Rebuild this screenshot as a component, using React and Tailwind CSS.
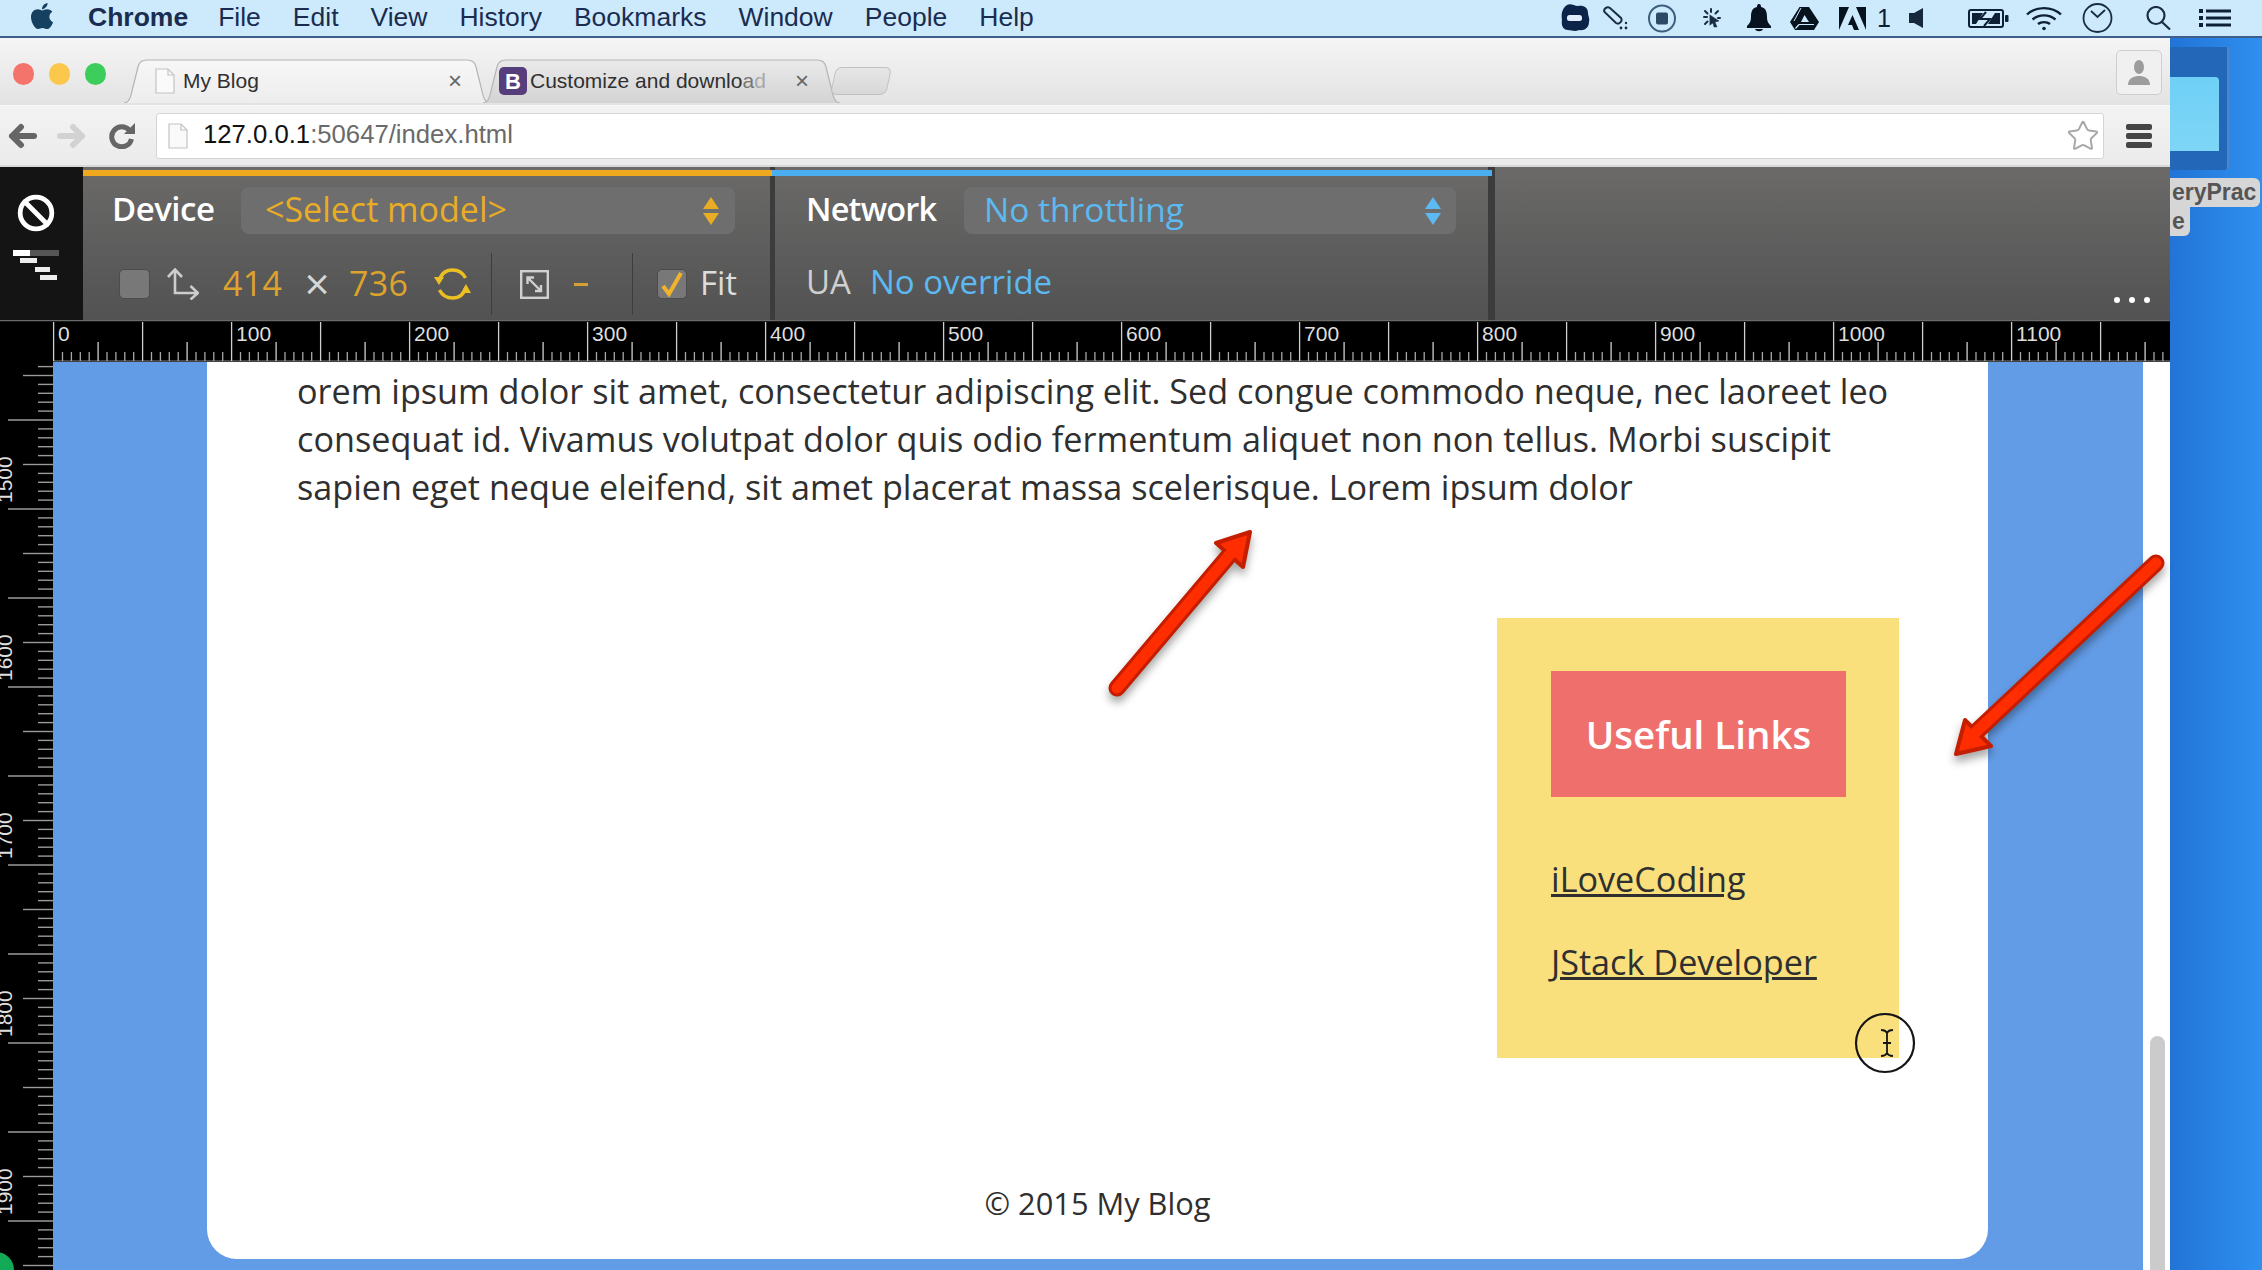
import { Ban, Star } from 'lucide-react';
import { FaApple } from 'react-icons/fa';

const MENU = ['File', 'Edit', 'View', 'History', 'Bookmarks', 'Window', 'People', 'Help'];

function MenuBar() {
    return (
        <div className="h-[38px] shrink-0 flex items-center bg-[#cdeafd] border-b-2 border-[#3f5f8a] font-['Liberation_Sans',sans-serif] text-[26.5px] text-[#1a2c50]">
            <FaApple className="ml-[29px] w-[26px] h-[30px] text-[#16405f] -mt-1" />
            <span className="ml-[33px] font-bold">Chrome</span>
            <div className="ml-[30px] flex gap-[32px]">
                {MENU.map((m) => <span key={m}>{m}</span>)}
            </div>
            <TrayIcons />
        </div>
    );
}

function TrayIcons() {
    return (
        <div className="ml-auto mr-[31px] flex items-center text-[#0d2036]">
            <svg className="w-[29px] h-[28px]" viewBox="0 0 29 28"><path d="M6 1 C10 -1 13 2 17 2 C22 1 27 3 27 9 C27 12 29 14 28 18 C28 24 23 27 18 26 C14 28 10 26 7 26 C2 26 0 21 1 16 C0 11 1 4 6 1Z" fill="#0b2448" /><rect x="6" y="11" width="15" height="6" rx="2.5" fill="#dfeefa" /></svg>
            <svg className="ml-[12px] w-[27px] h-[25px]" viewBox="0 0 27 25" fill="none" stroke="#1a2c44" strokeWidth="2"><path d="M2.5 6 C1 3 5 0 8 2 L19 12 C21 15 17 19 14 17 Z" /><g fill="#1a2c44" stroke="none"><circle cx="19" cy="22" r="1.4" /><circle cx="24" cy="22" r="1.4" /><circle cx="24" cy="17" r="1.2" /></g></svg>
            <svg className="ml-[19px] w-[28px] h-[29px]" viewBox="0 0 28 29"><circle cx="14" cy="14.5" r="13" fill="none" stroke="#3c5f7c" strokeWidth="2" /><rect x="8" y="8.5" width="12" height="12" rx="2" fill="#2a4a66" /></svg>
            <svg className="ml-[26px] w-[20px] h-[20px]" viewBox="0 0 20 20" stroke="#1a2c44" strokeWidth="2" strokeLinecap="round"><path d="M9 1 V4 M2 9 H5 M3 3 L5.5 5.5 M16 3 L13.5 5.5 M3 16 L5.5 13.5 M18 10 H16" /><path d="M8 7 L17 13 L13 14 L15 19 L12 19 L11 15 L8 17Z" fill="#1a2c44" strokeWidth="0.5" /></svg>
            <svg className="ml-[24px] w-[26px] h-[28px]" viewBox="0 0 26 28" fill="#07121f"><path d="M13 0 C15 0 15 2 15 3 C20 4 21 8 21 13 C21 18 23 20 25 22 V24 H1 V22 C3 20 5 18 5 13 C5 8 6 4 11 3 C11 2 11 0 13 0Z" /><path d="M9 25 H17 C16 28 10 28 9 25Z" /></svg>
            <svg className="ml-[18px] w-[29px] h-[23px]" viewBox="0 0 29 23"><path d="M9.5 0 H19 L29 15 L24 23 H5 L0 15 Z" fill="#07121f" /><path d="M14.5 8 L19 15 H11Z" fill="#cdeafd" /><path d="M9 17.5 L5.5 21.5 M9 17.5 H24" stroke="#cdeafd" strokeWidth="1.2" /><path d="M11 1 L4 14" stroke="#cdeafd" strokeWidth="1" /></svg>
            <svg className="ml-[20px] w-[27px] h-[23px]" viewBox="0 0 27 23"><path d="M0 0 H10 L0 23Z M17 0 H27 V23Z" fill="#07121f" /><path d="M13.5 8 L20 23 H15 L13 18 H9 Z" fill="#07121f" /></svg>
            <span className="ml-[11px] w-[9px] text-[25px] leading-none">1</span>
            <svg className="ml-[23px] w-[14px] h-[20px]" viewBox="0 0 14 20" fill="#16283c"><path d="M0 5 H5 L14 0 V20 L5 15 H0Z" /></svg>
            <svg className="ml-[45px] w-[41px] h-[19px]" viewBox="0 0 41 19" fill="none"><rect x="1" y="1" width="34" height="17" rx="2" stroke="#0d2036" strokeWidth="2" /><rect x="37" y="6" width="3.5" height="7" rx="1" fill="#0d2036" /><path d="M4 4 H15 L8 15 H4Z M27 4 H32 V15 H20Z" fill="#0d2036" /><path d="M18 3 L12 10 H22 L16 17" stroke="#0d2036" strokeWidth="2" /></svg>
            <svg className="ml-[17px] w-[36px] h-[25px]" viewBox="0 0 36 25" fill="none" stroke="#0d2036" strokeWidth="2.4"><path d="M1 8.5 C10 0 26 0 35 8.5 M6.5 13.5 C13 8 23 8 29.5 13.5 M12 18 C15 15.5 21 15.5 24 18" /><circle cx="18" cy="22.5" r="1.8" fill="#0d2036" stroke="none" /></svg>
            <svg className="ml-[20px] w-[31px] h-[30px]" viewBox="0 0 31 30" fill="none" stroke="#1a2c44" strokeWidth="1.8"><circle cx="15.5" cy="15" r="14" /><path d="M9 8 L15.5 14 L23 7" /></svg>
            <svg className="ml-[33px] w-[25px] h-[24px]" viewBox="0 0 25 24" fill="none" stroke="#1a2c44" strokeWidth="2.2"><circle cx="10" cy="9.5" r="8.5" /><path d="M16 16 L24 23.5" /></svg>
            <svg className="ml-[28px] w-[32px] h-[18px]" viewBox="0 0 32 18" fill="#0d2036"><path d="M0 0 H4 V4 H0Z M0 7 H4 V11 H0Z M0 14 H4 V18 H0Z M7 0.5 H32 V3.5 H7Z M7 7.5 H32 V10.5 H7Z M7 14.5 H32 V17.5 H7Z" /></svg>
        </div>
    );
}

function PageIcon({ className }) {
    return (
        <svg className={className} viewBox="0 0 20 26" fill="none">
            <path d="M1 1 H13 L19 7 V25 H1 Z" fill="#fafafa" stroke="#c4c4c4" strokeWidth="1.2" />
            <path d="M13 1 V7 H19" stroke="#c4c4c4" strokeWidth="1.2" />
        </svg>
    );
}

function TabShape({ width, from, to }) {
    return (
        <svg className="absolute inset-0" width={width} height="44" viewBox={`0 0 ${width} 44`}>
            <defs>
                <linearGradient id={from.slice(1)} x1="0" y1="0" x2="0" y2="1">
                    <stop offset="0" stopColor={from} />
                    <stop offset="1" stopColor={to} />
                </linearGradient>
            </defs>
            <path d={`M0 44 C6 44 7 36 9 28 L14 8 C15 3 18 1 23 1 H${width - 23} C${width - 18} 1 ${width - 15} 3 ${width - 14} 8 L${width - 9} 28 C${width - 7} 36 ${width - 6} 44 ${width} 44`} fill={`url(#${from.slice(1)})`} stroke="#b5b5b5" strokeWidth="1.2" />
        </svg>
    );
}

function TabStrip() {
    return (
        <div className="h-[67px] shrink-0 flex bg-linear-to-b from-[#f6f5f5] to-[#e3e3e3] font-['Liberation_Sans',sans-serif]">
            <div className="flex gap-[15px] pl-[13px] pt-[25px] h-fit">
                <span className="w-[21px] h-[22px] rounded-full bg-[#f4736b]" />
                <span className="w-[21px] h-[22px] rounded-full bg-[#fbc84b]" />
                <span className="w-[21px] h-[22px] rounded-full bg-[#3ccd5a]" />
            </div>
            <div className="ml-[18px] mt-[21px] relative w-[366px] h-[44px]">
                <TabShape width={366} from="#f7f7f7" to="#ededed" />
                <div className="relative h-full flex items-center text-[21px] text-[#303030]">
                    <PageIcon className="ml-[31px] w-[20px] h-[26px]" />
                    <span className="ml-[8px]">My Blog</span>
                    <span className="ml-auto mr-[28px] text-[#666] text-[24px] leading-none">×</span>
                </div>
            </div>
            <div className="-ml-[7px] mt-[21px] relative w-[357px] h-[44px]">
                <TabShape width={357} from="#eaeaea" to="#d3d3d3" />
                <div className="relative h-full flex items-center text-[21px] text-[#303030]">
                    <span className="ml-[16px] w-[28px] h-[28px] rounded-[5px] bg-[#563d7c] flex items-center justify-center text-white font-bold text-[22px]">B</span>
                    <span className="ml-[3px] w-[236px] overflow-hidden whitespace-nowrap">Customize and downlo<span className="text-[#777]">a</span><span className="text-[#a8a8a8]">d</span></span>
                    <span className="ml-auto mr-[31px] text-[#666] text-[24px] leading-none">×</span>
                </div>
            </div>
            <div className="-ml-[7px] mt-[29px] w-[56px] h-[28px] bg-linear-to-b from-[#e6e6e6] to-[#d8d8d8] border border-[#c0c0c0] rounded-[6px] -skew-x-12" />
            <div className="ml-auto mr-[8px] mt-[12px] w-[46px] h-[45px] rounded-[5px] border border-[#cfcfcf] bg-[#f0f0f0] flex flex-col items-center justify-center">
                <svg className="w-[24px] h-[26px]" viewBox="0 0 24 26" fill="#9c9c9c"><ellipse cx="12" cy="7" rx="5" ry="7" /><path d="M1 25 C1 18 7 16 12 16 C17 16 23 18 23 25Z" /></svg>
            </div>
        </div>
    );
}

function Toolbar() {
    return (
        <div className="h-[60px] shrink-0 flex items-center bg-linear-to-b from-[#f3f3f3] to-[#ebebeb] border-t border-[#f8f8f8] font-['Liberation_Sans',sans-serif]">
            <svg className="ml-[8px] w-[29px] h-[26px] fill-none stroke-[#666]" viewBox="0 0 29 26" strokeWidth="6" strokeLinecap="round" strokeLinejoin="round"><path d="M4 13 H26 M13 4 L4 13 L13 22" /></svg>
            <svg className="ml-[20px] w-[29px] h-[26px] fill-none stroke-[#d2d2d2]" viewBox="0 0 29 26" strokeWidth="6" strokeLinecap="round" strokeLinejoin="round"><path d="M25 13 H3 M16 4 L25 13 L16 22" /></svg>
            <svg className="ml-[23px] w-[26px] h-[26px]" viewBox="0 0 26 26" fill="none"><path d="M20.5 7.5 A10 10 0 1 0 22.5 16" stroke="#666" strokeWidth="5" /><path d="M15 11 L26 0 V11Z" fill="#666" /></svg>
            <div className="ml-[21px] w-[1948px] h-[46px] bg-white border border-[#d5d5d5] rounded-[3px] flex items-center relative">
                <PageIcon className="ml-[11px] w-[20px] h-[26px]" />
                <span className="ml-[15px] -mt-[2px] text-[25.7px] text-[#111]">127.0.0.1<span className="text-[#6a6a6a]">:50647/index.html</span></span>
                <Star className="ml-auto mr-[3px] w-[34px] h-[34px] text-[#a8a8a8]" strokeWidth={1.4} />
            </div>
            <div className="ml-[22px] flex flex-col gap-[3px]">
                <span className="w-[26px] h-[6px] rounded-[2px] bg-[#454545]" />
                <span className="w-[26px] h-[6px] rounded-[2px] bg-[#454545]" />
                <span className="w-[26px] h-[6px] rounded-[2px] bg-[#454545]" />
            </div>
        </div>
    );
}

function UpDown({ up, down }) {
    return (
        <svg className="ml-auto w-[16px] h-[28px]" viewBox="0 0 16 28">
            <path d="M8 0 L16 12 H0Z" fill={up} />
            <path d="M8 28 L16 16 H0Z" fill={down} />
        </svg>
    );
}

function DevBar() {
    return (
        <div className="h-[155px] shrink-0 flex border-t-2 border-[#d8d8d8] bg-linear-to-b from-[#6b6a69] to-[#525252] font-['Open_Sans',sans-serif]">
            <div className="w-[83px] bg-[#141414] flex flex-col items-center">
                <Ban className="ml-[-11px] mt-[27px] w-[38px] h-[38px] text-white" strokeWidth={3} />
                <svg className="ml-[-11px] mt-[18px] w-[46px] h-[30px]" viewBox="0 0 46 30">
                    <rect x="0" y="0" width="17" height="6" fill="#fff" /><rect x="17" y="0" width="29" height="6" fill="#555" />
                    <rect x="7" y="8" width="17" height="5" fill="#eee" /><rect x="22" y="17" width="15" height="5" fill="#eee" /><rect x="27" y="25" width="17" height="5" fill="#eee" />
                </svg>
            </div>

            {/* Device */}
            <div className="w-[687px] flex flex-col">
                <div className="relative z-10 mt-[3px] -mr-[2px] h-[6px] bg-[#f0a91e]" />
                <div className="mt-[11px] h-[47px] flex items-center pl-[29px]">
                    <span className="w-[129px] -mt-[3px] text-[33px] font-semibold text-white tracking-[-0.5px]">Device</span>
                    <div className="w-[494px] h-[47px] rounded-[8px] bg-[#6e6e6e] flex items-center pl-[24px] pr-[16px] text-[34px] font-medium text-[#e9ad25]">
                        <span className="-mt-[3px]">&lt;Select model&gt;</span>
                        <UpDown up="#e9ad25" down="#e9ad25" />
                    </div>
                </div>
                <div className="mt-[19px] h-[62px] flex items-center">
                    <span className="ml-[36px] w-[31px] h-[30px] rounded-[5px] bg-[#787878] border border-[#4c4c4c]" />
                    <svg className="ml-[17px] w-[32px] h-[32px]" viewBox="0 0 32 32" fill="none" stroke="#cdcdcd" strokeWidth="2.6"><path d="M1 9 L8 1.5 L15 9 M8 2 V25 H30 M23.5 18 L31 25 L23.5 31.5" /></svg>
                    <span className="ml-[24px] w-[60px] -mt-[1px] text-[34px] font-medium tracking-[0.3px] text-[#dda32d]">414</span>
                    <span className="ml-[21px] w-[26px] -mt-[3px] text-[44px] leading-none text-[#d6d6d6] text-center">×</span>
                    <span className="ml-[19px] w-[60px] -mt-[1px] text-[34px] font-medium tracking-[0.3px] text-[#dda32d]">736</span>
                    <svg className="ml-[25px] w-[37px] h-[32px]" viewBox="0 0 37 32" fill="none" stroke="#ecc022" strokeWidth="3.4"><path d="M5 13 C7 6 12 2 18.5 2 C24 2 29 5 31.5 10 M32 19 C30 26 25 30 18.5 30 C13 30 8 27 5.5 22" /><path d="M0 9 H10 L5 17Z M27 25 H37 L32 16Z" fill="#ecc022" stroke="none" /></svg>
                    <span className="ml-[20px] w-px h-[62px] bg-[#3d3d3d]" />
                    <svg className="ml-[28px] w-[29px] h-[29px]" viewBox="0 0 29 29" fill="none" stroke="#d0d0d0" strokeWidth="2.4"><rect x="1.2" y="1.2" width="26.6" height="26.6" /><path d="M7.5 7.5 L21 21 M7.5 14 V7.5 H14 M21 15 V21 H15" /></svg>
                    <span className="ml-[25px] w-[14px] h-[3px] bg-[#d6a034]" />
                    <span className="ml-[44px] w-px h-[62px] bg-[#3d3d3d]" />
                    <span className="ml-[24px] w-[30px] h-[30px] rounded-[5px] bg-[#787878] border border-[#4c4c4c] flex items-center justify-center">
                        <svg className="w-[24px] h-[26px]" viewBox="0 0 24 26" fill="none" stroke="#f0b32a" strokeWidth="4"><path d="M3 15 L9 23 L21 2" /></svg>
                    </span>
                    <span className="ml-[13px] -mt-[2px] text-[33px] font-medium text-[#dcdcdc]">Fit</span>
                </div>
            </div>
            <div className="w-[5px] bg-[#3c3c3c]" />

            {/* Network */}
            <div className="w-[713px] flex flex-col">
                <div className="relative z-20 mt-[3px] -ml-[3px] -mr-[4px] h-[6px] bg-[#4aaef0]" />
                <div className="mt-[11px] h-[47px] flex items-center pl-[31px]">
                    <span className="w-[158px] -mt-[3px] text-[32.5px] font-semibold text-white tracking-[-0.8px]">Network</span>
                    <div className="w-[492px] h-[47px] rounded-[8px] bg-[#6e6e6e] flex items-center pl-[20px] pr-[15px] text-[33.5px] font-medium text-[#5cb9f2]">
                        <span className="-mt-[3px]">No throttling</span>
                        <UpDown up="#5cb9f2" down="#5cb9f2" />
                    </div>
                </div>
                <div className="mt-[19px] h-[62px] flex items-center pl-[31px] text-[33px] font-medium">
                    <span className="-mt-[4px] text-[#cfcfcf]">UA</span>
                    <span className="-mt-[4px] ml-[19px] text-[#5cb9f2]">No override</span>
                </div>
            </div>
            <div className="w-[7px] bg-[#3c3c3c]" />

            <div className="flex-1 flex items-end justify-end pr-[20px] pb-[17px] gap-[9px]">
                <span className="w-[6px] h-[6px] rounded-full bg-white" />
                <span className="w-[6px] h-[6px] rounded-full bg-white" />
                <span className="w-[6px] h-[6px] rounded-full bg-white" />
            </div>
        </div>
    );
}

const PX = 1.78;

function TopRuler() {
    const ticks = [];
    for (let v = 0; v <= 1190; v += 5) {
        const x = 53.6 + v * PX;
        const y1 = v % 50 === 0 ? 2 : v % 25 === 0 ? 22 : 32;
        ticks.push(<line key={v} x1={x} x2={x} y1={y1} y2="41" stroke={v % 25 === 0 ? '#cfcfcf' : '#a8a8a8'} strokeWidth="1.3" />);
    }
    const labels = [];
    for (let v = 0; v <= 1100; v += 100) {
        labels.push(<text key={v} x={53.6 + v * PX + 4.5} y="21" fontSize="21" fill="#dedede" fontFamily="Liberation Sans">{v}</text>);
    }
    return (
        <svg className="shrink-0 w-[2170px] h-[42px] bg-black block" viewBox="0 0 2170 42">
            <line x1="0" x2="2170" y1="0.5" y2="0.5" stroke="#6a6a6a" strokeWidth="1.5" />
            <line x1="53" x2="2170" y1="41" y2="41" stroke="#888" strokeWidth="1" />
            {ticks}
            {labels}
        </svg>
    );
}

function SideRuler() {
    const ticks = [];
    const labels = [];
    for (let v = 1415; v <= 1925; v += 5) {
        const y = 1043 - 362 + (v - 1800) * PX;
        const x1 = v % 50 === 0 ? 8 : v % 25 === 0 ? 23 : 38;
        ticks.push(<line key={v} x1={x1} x2="53" y1={y} y2={y} stroke="#9a9a9a" strokeWidth="1.4" />);
        if (v % 100 === 0) {
            const ly = y - 6;
            labels.push(<text key={v} x="12" y={ly} fontSize="21" fill="#dedede" fontFamily="Liberation Sans" transform={`rotate(-90 12 ${ly})`}>{v}</text>);
        }
    }
    return (
        <svg className="shrink-0 w-[53px] h-[908px] bg-black block" viewBox="0 0 53 908">
            {ticks}
            {labels}
            <circle cx="-4" cy="908" r="18" fill="#12a957" />
        </svg>
    );
}

function PageContent() {
    return (
        <div className="flex-1 flex bg-[#639ce6] min-h-0">
            <div className="ml-[154px] w-[1781px] mb-[11px] bg-white rounded-b-[30px] flex flex-col font-['Open_Sans',sans-serif] text-[#2f2f2f] text-[34.2px] leading-[48px]">
                <p className="mt-[5px] pl-[90px] pr-[80px]">
                    orem ipsum dolor sit amet, consectetur adipiscing elit. Sed congue commodo neque, nec laoreet leo consequat id. Vivamus volutpat dolor quis odio fermentum aliquet non non tellus. Morbi suscipit sapien eget neque eleifend, sit amet placerat massa scelerisque. Lorem ipsum dolor
                </p>
                <div className="mt-[107px] ml-auto mr-[89px] w-[402px] h-[440px] bg-[#f9e07d] pt-[53px] pl-[54px]">
                    <div className="w-[295px] h-[126px] bg-[#ef6f6c] flex items-center justify-center text-white font-semibold text-[38.5px]">Useful Links</div>
                    <div className="mt-[58px] flex flex-col gap-[35px] items-start">
                        <a className="underline">iLoveCoding</a>
                        <a className="underline">JStack Developer</a>
                    </div>
                </div>
                <p className="mt-auto mb-[32px] text-center text-[30.8px]">© 2015 My Blog</p>
            </div>
            <div className="ml-[155px] w-[27px] bg-white flex flex-col justify-end pl-[7px]">
                <div className="w-[15px] h-[234px] bg-[#cbcbcb] rounded-t-full" />
            </div>
        </div>
    );
}

function DesktopEdge() {
    return (
        <div className="flex-1 flex flex-col bg-linear-to-r from-[#2274d6] to-[#2f90f0] font-['Liberation_Sans',sans-serif] font-bold text-[23px] text-[#555]">
            <div className="mt-[9px] w-[59px] h-[123px] pt-[30px] bg-[#2367b8] border-r-2 border-[#4b86c9] rounded-br-[4px]">
                <div className="w-[49px] h-[74px] bg-linear-to-b from-[#6fd0f6] to-[#7ed6f6] rounded-tr-[4px]" />
            </div>
            <div className="mt-[8px] w-[90px] h-[29px] pl-[2px] bg-[#d6d6d6] rounded-r-[6px] leading-[29px]">eryPrac</div>
            <div className="w-[20px] h-[29px] pl-[2px] bg-[#d6d6d6] rounded-br-[6px] leading-[29px]">e</div>
        </div>
    );
}

function Arrow({ className, viewBox, tail, neck, tip, a, b }) {
    return (
        <svg className={`absolute drop-shadow-[0_6px_4px_rgba(0,0,0,0.35)] ${className}`} viewBox={viewBox}>
            <line x1={tail[0]} y1={tail[1]} x2={neck[0]} y2={neck[1]} stroke="#c41d00" strokeWidth="17" strokeLinecap="round" />
            <polygon points={`${tip} ${a} ${b}`} fill="#ff2d00" stroke="#c41d00" strokeWidth="4" strokeLinejoin="round" />
            <line x1={tail[0]} y1={tail[1]} x2={neck[0]} y2={neck[1]} stroke="#ff2d00" strokeWidth="11" strokeLinecap="round" />
        </svg>
    );
}

export default function App() {
    return (
        <div className="relative w-[2262px] h-[1270px] overflow-hidden flex flex-col bg-[#2f90f0]">
            <MenuBar />
            <div className="flex-1 flex min-h-0">
                <div className="w-[2170px] flex flex-col">
                    <TabStrip />
                    <Toolbar />
                    <DevBar />
                    <TopRuler />
                    <div className="flex-1 flex min-h-0">
                        <SideRuler />
                        <PageContent />
                    </div>
                </div>
                <DesktopEdge />
            </div>

            {/* annotations from the video */}
            <Arrow className="left-[1090px] top-[510px] w-[190px] h-[200px]" viewBox="1090 510 190 200" tail={[1117, 688]} neck={[1232, 552]} tip={[1250, 532]} a={[1216, 543]} b={[1243, 567]} />
            <Arrow className="left-[1940px] top-[545px] w-[230px] h-[225px]" viewBox="1940 545 230 225" tail={[2156, 563]} neck={[1975, 733]} tip={[1956, 754]} a={[1965, 720]} b={[1991, 746]} />
            <svg className="absolute left-[1853px] top-[1011px] w-[64px] h-[64px]" viewBox="0 0 64 64" fill="none" stroke="#151515">
                <circle cx="32" cy="32" r="29" strokeWidth="2.2" />
                <path d="M28 19 C31 19 33 20 34 22 C35 20 37 19 40 19 M34 22 V42 M28 45 C31 45 33 44 34 42 C35 44 37 45 40 45 M30 32 H38" strokeWidth="1.8" />
            </svg>
        </div>
    );
}
